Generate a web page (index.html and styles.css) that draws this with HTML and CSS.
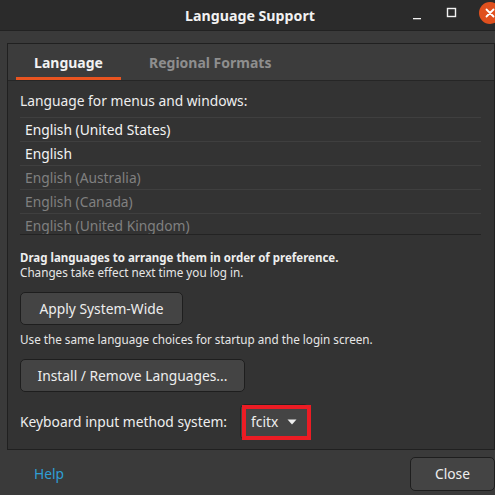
FILE: index.html
```html
<!DOCTYPE html>
<html>
<head>
<meta charset="utf-8">
<link rel="stylesheet" href="styles.css">
</head>
<body>
<div class="window">
  <header class="titlebar">
    <div class="tb-spacer"></div>
    <div class="tb-title">Language Support</div>
    <div class="tb-controls">
      <span class="ctl ctl-min"><svg width="10" height="10" viewBox="0 0 10 10"><rect x="0" y="8" width="8" height="1.3" fill="#f2f2f2"/></svg></span>
      <span class="ctl ctl-max"><svg width="12" height="12" viewBox="0 0 12 12"><rect x="1.5" y="1.5" width="8" height="8" fill="none" stroke="#f2f2f2" stroke-width="1.4"/></svg></span>
      <span class="ctl ctl-close"><svg width="12" height="12" viewBox="0 0 12 12"><path d="M2.5 2.5 L9.5 9.5 M9.5 2.5 L2.5 9.5" stroke="#fff" stroke-width="1.8" stroke-linecap="round"/></svg></span>
    </div>
  </header>

  <main class="body">
    <section class="notebook">
      <nav class="tabs">
        <div class="tab active">Language</div>
        <div class="tab">Regional Formats</div>
      </nav>
      <div class="page">
        <div class="caption">Language for menus and windows:</div>
        <div class="langlist">
          <div class="row">English (United States)</div>
          <div class="row">English</div>
          <div class="row dim">English (Australia)</div>
          <div class="row dim">English (Canada)</div>
          <div class="row dim last">English (United Kingdom)</div>
        </div>
        <div class="hint">
          <div class="hint-bold">Drag languages to arrange them in order of preference.</div>
          <div class="hint-small">Changes take effect next time you log in.</div>
        </div>
        <button class="btn btn-apply">Apply System-Wide</button>
        <div class="hint-small note">Use the same language choices for startup and the login screen.</div>
        <button class="btn btn-install">Install / Remove Languages...</button>
        <div class="kbd-row">
          <span class="kbd-label">Keyboard input method system:</span>
          <span class="combo">
            <span class="combo-text">fcitx</span>
            <svg class="combo-arrow" width="10" height="6" viewBox="0 0 10 6"><path d="M0.5 0.5 H9.5 L5 5.5 Z" fill="#eeeeee"/></svg>
            <span class="highlight"></span>
          </span>
        </div>
      </div>
    </section>
    <footer class="footer">
      <a class="help">Help</a>
      <button class="btn btn-close">Close</button>
    </footer>
  </main>
</div>
</body>
</html>
```

FILE: styles.css
```css
* { box-sizing: border-box; }
html, body { margin: 0; padding: 0; }
body {
  width: 495px;
  height: 495px;
  overflow: hidden;
  background: #3a3a3a;
  font-family: "Noto Sans", "Open Sans", sans-serif;
  color: #eeeeee;
}
.window { width: 495px; height: 495px; display: flex; flex-direction: column; }

.titlebar {
  height: 31px;
  background: #2b2b2b;
  border-bottom: 1px solid #222;
  display: grid;
  grid-template-columns: 1fr auto 1fr;
  align-items: center;
}
.tb-title {
  font-weight: bold;
  font-size: 14.2px;
  color: #f2f2f2;
  padding-left: 5px;
}
.tb-controls {
  display: flex;
  justify-content: flex-end;
  align-items: center;
  margin-right: -6px;
}
.ctl { display: flex; align-items: center; justify-content: center; }
.ctl-min { width: 12px; margin-right: 22px; margin-top: -1px; }
.ctl-max { width: 12px; margin-right: 21px; margin-top: -5px; }
.ctl-close {
  width: 22px; height: 22px; border-radius: 50%;
  background: #e0501e;
  margin-top: -5px;
}

.body { flex: 1; display: flex; flex-direction: column; padding: 12px 0 0 7px; }

.notebook {
  height: 407px;
  border: 1px solid #202020;
  background: #333333;
  display: flex;
  flex-direction: column;
}
.tabs {
  height: 37px;
  background: #3c3c3c;
  border-bottom: 1px solid #262626;
  display: flex;
  padding-left: 8px;
}
.tab {
  height: 36px;
  font-weight: bold;
  font-size: 14px;
  color: #8e8e8e;
  display: flex;
  align-items: center;
  justify-content: center;
  padding: 1px 19px 0 19px;
  white-space: nowrap;
}
.tab.active {
  width: 105px;
  color: #f2f2f2;
  border-bottom: 3px solid #e95420;
  padding-top: 3px;
}
.tab + .tab { padding-left: 28px; }

.page { padding: 10px 12px 0 12px; display: flex; flex-direction: column; align-items: flex-start; }
.caption { font-size: 13.8px; line-height: 20px; color: #eeeeee; height: 26px; }

.langlist {
  width: 461px;
  height: 118px;
  overflow: hidden;
  border-bottom: 1px solid #232323;
}
.row {
  height: 24px;
  line-height: 23px;
  border-top: 1px solid #3f3f3f;
  padding-left: 5px;
  font-size: 13.8px;
  color: #f4f4f4;
}
.row.dim { color: #808080; }

.hint { margin-top: 15px; }
.hint-bold { font-weight: bold; font-size: 11.5px; line-height: 15px; color: #eeeeee; }
.hint-small { font-size: 11.7px; line-height: 15px; color: #e6e6e6; }

.btn {
  font-family: inherit;
  font-size: 13.8px;
  color: #eeeeee;
  background: #444444;
  border: 1px solid #1e1e1e;
  border-radius: 5px;
  height: 33px;
  padding: 0;
  white-space: nowrap;
  text-align: center;
  cursor: default;
}
.btn-apply { width: 163px; margin-top: 12px; }
.note { margin-top: 7px; }
.btn-install { width: 225px; margin-top: 12px; }

.kbd-row { margin-top: 11px; display: flex; align-items: center; height: 37px; }
.kbd-label { font-size: 13.8px; color: #eeeeee; margin-right: 13px; white-space: nowrap; }
.combo {
  position: relative;
  height: 36px;
  width: 69px;
  background: #444444;
  border: 1px solid #232323;
  border-radius: 5px;
  display: flex;
  align-items: center;
  padding-left: 10px;
}
.combo-text { font-size: 13.8px; color: #eeeeee; }
.combo-arrow { margin-left: 9px; margin-top: 1px; }
.highlight {
  position: absolute;
  left: 1px; top: 0; right: -3px; bottom: -1px;
  border: 4px solid #ec1c24;
}

.footer {
  flex: 1;
  display: flex;
  align-items: center;
  justify-content: space-between;
  padding: 0 0 0 27px;
}
.help { font-size: 13.8px; color: #2f9fd6; margin-top: 1px; }
.btn-close { width: 85px; height: 34px; margin-top: 2px; }
```
